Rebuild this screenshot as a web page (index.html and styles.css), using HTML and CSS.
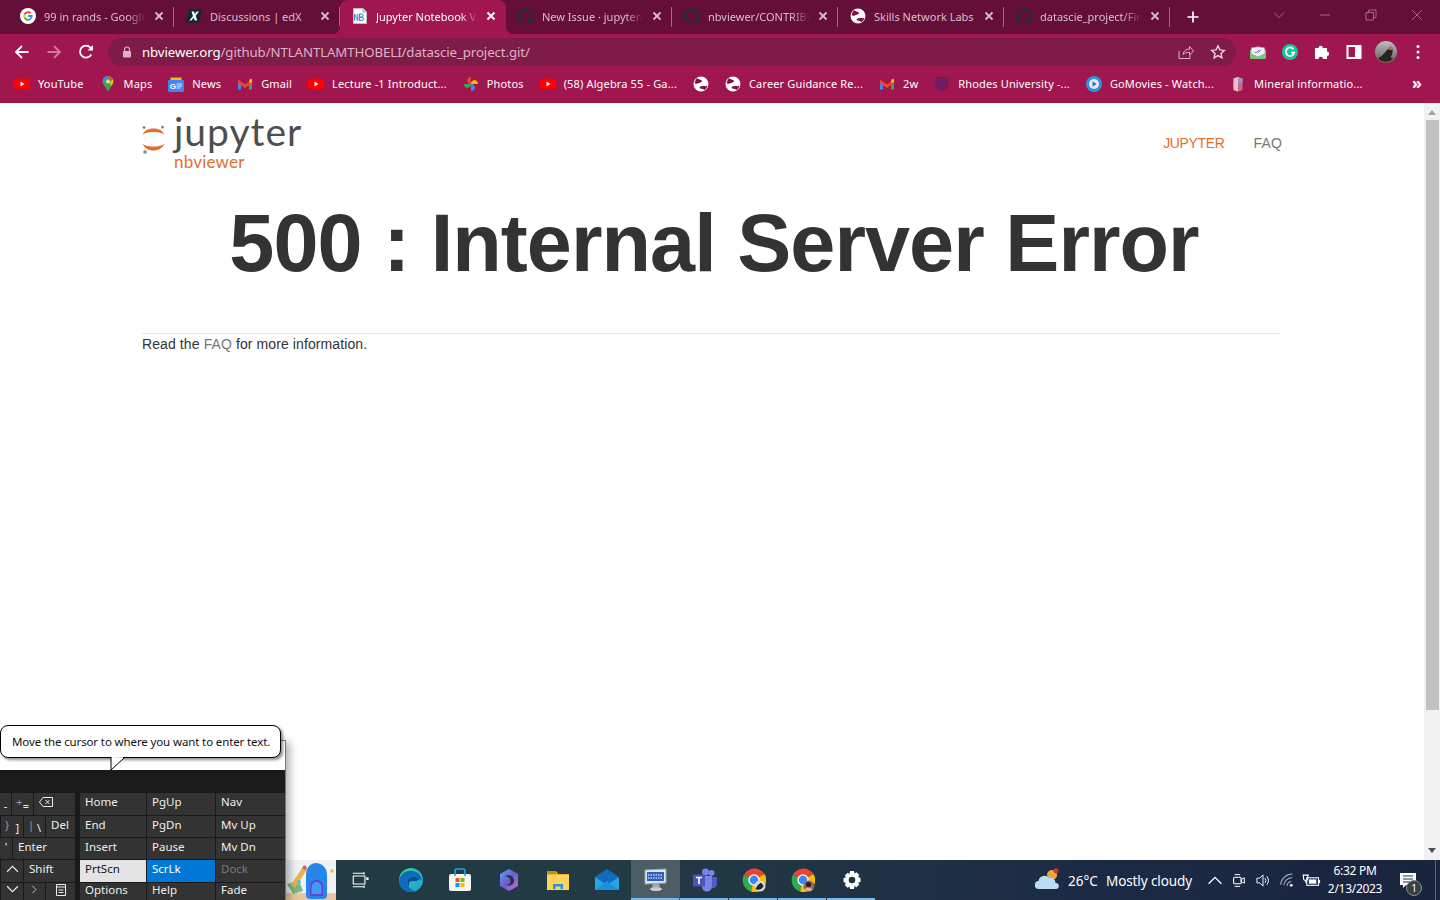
FILE: index.html
```html
<!DOCTYPE html>
<html lang="en">
<head>
<meta charset="utf-8">
<title>Jupyter Notebook Viewer</title>
<link rel="stylesheet" href="styles.css">
</head>
<body>
<svg class="defs" width="0" height="0" aria-hidden="true">
  <defs>
    <symbol id="github" viewBox="0 0 16 16"><path d="M8 0C3.58 0 0 3.58 0 8c0 3.54 2.29 6.53 5.47 7.59.4.07.55-.17.55-.38 0-.19-.01-.82-.01-1.49-2.01.37-2.53-.49-2.69-.94-.09-.23-.48-.94-.82-1.13-.28-.15-.68-.52-.01-.53.63-.01 1.08.58 1.23.82.72 1.21 1.87.87 2.33.66.07-.52.28-.87.51-1.07-1.78-.2-3.64-.89-3.64-3.95 0-.87.31-1.59.82-2.15-.08-.2-.36-1.02.08-2.12 0 0 .67-.21 2.2.82.64-.18 1.32-.27 2-.27.68 0 1.36.09 2 .27 1.53-1.04 2.2-.82 2.2-.82.44 1.1.16 1.92.08 2.12.51.56.82 1.27.82 2.15 0 3.07-1.87 3.75-3.65 3.95.29.25.54.73.54 1.48 0 1.07-.01 1.93-.01 2.2 0 .21.15.46.55.38A8.013 8.013 0 0016 8c0-4.42-3.58-8-8-8z" fill="#2a2d33"/></symbol>
    <symbol id="globe" viewBox="0 0 16 16"><circle cx="8" cy="8" r="7.500" fill="#fff"/><path d="M4 2.200C5.500 3 6.500 3.800 8 4c1 .1 1.200 1.300.5 2-1 .9-2.600.6-3.600 1.500-.8.7-1.800.3-3.200-.3C2 5.200 2.800 3.400 4 2.200zM6.500 11c1.500-.9 3.200-1.300 5-.9 1.100.2 2.300 0 2.900-.4-.4 1.800-1.300 3.200-2.700 4.200-1.200-.3-1.500-1.200-2.800-1.200-1 0-2.100-.2-2.400-1.700z" fill="#7d1440"/></symbol>
    <symbol id="youtube" viewBox="0 0 16 16"><rect x="0" y="2.500" width="16" height="11" rx="3" fill="#f00"/><path d="M6.500 5.500l4 2.500-4 2.500z" fill="#fff"/></symbol>
    <symbol id="gmail" viewBox="0 0 16 16"><path d="M1 4v9.500h3V6z" fill="#4285f4"/><path d="M15 4v9.500h-3V6z" fill="#34a853"/><path d="M1 3.500 8 8.500l7-5v3.500L8 12 1 7z" fill="#ea4335"/><path d="M12 6.200V4.500L13.500 2.800 15 3.500V7z" fill="#fbbc04"/></symbol>
    <symbol id="close" viewBox="0 0 10 10"><path d="M1.500 1.500l7 7m0-7l-7 7" stroke="currentColor" stroke-width="1.800" fill="none"/></symbol>
    <symbol id="chromeicon" viewBox="0 0 24 24"><path d="M12 12 2 6.500A12 12 0 0 1 22.500 6z" fill="#ea4335"/><path d="M12 12 2 6.500a12 12 0 0 0 7 17z" fill="#34a853"/><path d="M12 12l10.500-6a12 12 0 0 1-13.500 17.600z" fill="#fbbc04"/><circle cx="12" cy="12" r="5.700" fill="#fff"/><circle cx="12" cy="12" r="4.400" fill="#4285f4"/></symbol>
  </defs>
</svg>

<header class="chrome">
  <div class="tabstrip">
    <div class="tab sep">
      <svg class="favicon" viewBox="0 0 16 16"><circle cx="8" cy="8" r="8" fill="#fff"/><path d="M8 3.300a4.700 4.700 0 0 1 3.200 1.200L9.900 5.800A2.900 2.900 0 0 0 5.300 7L3.800 5.800A4.700 4.700 0 0 1 8 3.300z" fill="#ea4335"/><path d="M3.800 5.800 5.300 7a2.900 2.900 0 0 0 0 2L3.800 10.200a4.700 4.700 0 0 1 0-4.400z" fill="#fbbc04"/><path d="M3.800 10.200 5.300 9a2.900 2.900 0 0 0 4.300 1.500l1.400 1.100A4.700 4.700 0 0 1 3.800 10.200z" fill="#34a853"/><path d="M12.600 7.100H8v1.900h2.700a2.300 2.300 0 0 1-1.100 1.500l1.400 1.100a4.700 4.700 0 0 0 1.600-4.500z" fill="#4285f4"/></svg>
      <span class="tab-title">99 in rands - Google Search</span>
      <svg class="tab-x"><use href="#close"/></svg>
    </div>
    <div class="tab sep">
      <svg class="favicon" viewBox="0 0 16 16"><path d="M3 1.500h13l-3 13H0z" fill="#0e2a2d"/><path d="M5.500 3.500H8l.8 2.600 2-2.600h2.200L9.700 7.800l1.500 4.700H8.700L7.800 9.600l-2.300 2.900H3.300L7 8z" fill="#fff"/></svg>
      <span class="tab-title tab-full">Discussions | edX</span>
      <svg class="tab-x"><use href="#close"/></svg>
    </div>
    <div class="tab tab-active">
      <svg class="favicon" viewBox="0 0 16 16"><path d="M1.500.5H11l3.500 3.500v11.500h-13z" fill="#fff" stroke="#bbb"/><path d="M11 .5V4h3.500" fill="#ddd" stroke="#aaa"/><rect x="1.500" y="5" width="11" height="8" fill="#e8f0f7"/><path d="M2.500 12.500V6l3.200 6.500V6M7.500 6v6.500h2.200a1.600 1.600 0 0 0 0-3.400H7.500m0 0h2a1.500 1.500 0 0 0 0-3.100h-2" stroke="#3a7cb5" fill="none" stroke-width=".9"/></svg>
      <span class="tab-title">Jupyter Notebook Viewer</span>
      <svg class="tab-x"><use href="#close"/></svg>
    </div>
    <div class="tab sep">
      <svg class="favicon"><use href="#github"/></svg>
      <span class="tab-title">New Issue · jupyter/nbviewer</span>
      <svg class="tab-x"><use href="#close"/></svg>
    </div>
    <div class="tab sep">
      <svg class="favicon"><use href="#github"/></svg>
      <span class="tab-title">nbviewer/CONTRIBUTING.md</span>
      <svg class="tab-x"><use href="#close"/></svg>
    </div>
    <div class="tab sep">
      <svg class="favicon"><use href="#globe"/></svg>
      <span class="tab-title tab-full">Skills Network Labs</span>
      <svg class="tab-x"><use href="#close"/></svg>
    </div>
    <div class="tab sep">
      <svg class="favicon"><use href="#github"/></svg>
      <span class="tab-title">datascie_project/Final.ipynb</span>
      <svg class="tab-x"><use href="#close"/></svg>
    </div>
    <svg class="newtab" viewBox="0 0 12 12"><path d="M6 .5v11M.5 6h11" stroke="#fff" stroke-width="1.700"/></svg>
    <div class="winctl">
      <svg class="win-ic" viewBox="0 0 12 12"><path d="M1 3.500l5 5 5-5" fill="none" stroke="currentColor"/></svg>
      <svg class="win-ic" viewBox="0 0 12 12"><path d="M1 6h10" stroke="currentColor"/></svg>
      <svg class="win-ic" viewBox="0 0 12 12"><path d="M1 3.500h7.500V11H1zM3.500 3.500V1H11v7.500H8.500" fill="none" stroke="currentColor"/></svg>
      <svg class="win-ic" viewBox="0 0 12 12"><path d="M1 1l10 10M11 1 1 11" stroke="currentColor"/></svg>
    </div>
  </div>

  <div class="toolbar">
    <svg class="nav-ic" viewBox="0 0 16 16"><path d="M14.500 8H2M8 2 2 8l6 6" fill="none" stroke="#fff" stroke-width="1.800"/></svg>
    <svg class="nav-ic nav-dim" viewBox="0 0 16 16"><path d="M1.500 8H14M8 2l6 6-6 6" fill="none" stroke="#cf7a9d" stroke-width="1.800"/></svg>
    <svg class="nav-ic" viewBox="0 0 16 16"><path d="M13.300 10.500A6 6 0 1 1 12.500 3.600" fill="none" stroke="#fff" stroke-width="1.800"/><path d="M9.500 6.500H15V1z" fill="#fff"/></svg>
    <div class="omnibox">
      <svg class="lock" viewBox="0 0 10 12"><path d="M2.500 5V3.500a2.500 2.500 0 0 1 5 0V5" fill="none" stroke="#d8b4c6" stroke-width="1.200"/><rect x="1" y="5" width="8" height="6.500" rx="1" fill="#d8b4c6"/></svg>
      <span class="url"><span class="url-host">nbviewer.org</span>/github/NTLANTLAMTHOBELI/datascie_project.git/</span>
      <svg class="omni-ic" viewBox="0 0 16 16"><path d="M1 7v7.500h11V11M5 10.500c.5-3.500 3-5.500 6.500-5.500V2.500L15.500 7l-4 4V8.300C8.500 8.200 6.500 9 5 10.500z" fill="none" stroke="#d8b4c6"/></svg>
      <svg class="omni-ic" viewBox="0 0 16 16"><path d="m8 1.800 1.900 4.100 4.400.5-3.300 3 .9 4.400L8 11.600l-3.900 2.200.9-4.400-3.300-3 4.400-.5z" fill="none" stroke="#ecd6e0" stroke-width="1.400"/></svg>
    </div>
    <div class="ext-row">
      <svg class="ext" viewBox="0 0 16 16"><path d="M0 6l8-4 8 4v7.500a1.500 1.500 0 0 1-1.500 1.500h-13A1.500 1.500 0 0 1 0 13.500z" fill="#7dc27d"/><path d="M1.500 3.500h13v6L8 12.500l-6.500-3z" fill="#f1f1fa"/><path d="M4.500 7.500l1.500 1.500 3-3M8 8.500 10.800 6" fill="none" stroke="#6c63c9" stroke-width=".9"/></svg>
      <svg class="ext" viewBox="0 0 16 16"><circle cx="8" cy="8" r="8" fill="#15c39a"/><path d="M11.500 5.200A4.200 4.200 0 1 0 12.200 8.500H9" fill="none" stroke="#fff" stroke-width="1.700"/></svg>
      <svg class="ext" viewBox="0 0 16 16"><path d="M1 5h3.500a2.200 2.200 0 1 1 4.400 0H13v3.500a2.200 2.200 0 1 1 0 4.400V16H9a2.200 2.200 0 1 0-4.400 0H1z" fill="#fff" transform="translate(0 -1)"/></svg>
      <svg class="ext" viewBox="0 0 16 16"><path d="M1.500 2h13v12h-13z" fill="none" stroke="#fff" stroke-width="2"/><rect x="9" y="2" width="6" height="12" fill="#fff"/></svg>
      <svg class="avatar" viewBox="0 0 24 24"><defs><linearGradient id="av" x1="0" y1="0" x2="0" y2="1"><stop offset="0" stop-color="#b7bfc4"/><stop offset="1" stop-color="#6a5a50"/></linearGradient></defs><circle cx="12" cy="12" r="12" fill="url(#av)"/><path d="M4 18c4-1 6-5 9-8 2-2 5-3 6-1 1 3-1 7-2 9l3 1a12 12 0 0 1-16 1z" fill="#2a2220"/><circle cx="17" cy="8" r="2.200" fill="#a9705a"/></svg>
      <svg class="menu-dots" viewBox="0 0 4 16"><circle cx="2" cy="2.500" r="1.500" fill="#fff"/><circle cx="2" cy="8" r="1.500" fill="#fff"/><circle cx="2" cy="13.500" r="1.500" fill="#fff"/></svg>
    </div>
  </div>

  <nav class="bookmarks">
    <a class="bm"><svg class="bm-ic"><use href="#youtube"/></svg><span>YouTube</span></a>
    <a class="bm"><svg class="bm-ic" viewBox="0 0 16 16"><path d="M8 0a5.500 5.500 0 0 1 5.500 5.500C13.500 9 10 11 8 16 6 11 2.500 9 2.500 5.500A5.500 5.500 0 0 1 8 0z" fill="#34a853"/><path d="M3 3.300A5.500 5.500 0 0 1 8 0v3.500L3.500 7z" fill="#4285f4"/><path d="M8 0a5.500 5.500 0 0 1 5 3l-3.500 1z" fill="#ea4335"/><path d="M13 3.300c1 2.700-.5 5-2 6.500L9.500 6.500z" fill="#fbbc04"/><circle cx="8" cy="5.500" r="2" fill="#f5d9a0"/></svg><span>Maps</span></a>
    <a class="bm"><svg class="bm-ic" viewBox="0 0 16 16"><rect x="2" y="1" width="12" height="6" rx="1" fill="#34a853"/><rect x="3" y="2" width="10" height="3" fill="#fbbc04"/><rect y="4" width="16" height="12" rx="1.200" fill="#4285f4"/><text class="news-g" x="1.800" y="12.500">G</text><path d="M8.500 8h5.500M8.500 10h5.500M8.500 12h4" stroke="#dbe8fb" stroke-width="1"/></svg><span>News</span></a>
    <a class="bm"><svg class="bm-ic"><use href="#gmail"/></svg><span>Gmail</span></a>
    <a class="bm"><svg class="bm-ic"><use href="#youtube"/></svg><span>Lecture -1 Introduct...</span></a>
    <a class="bm"><svg class="bm-ic" viewBox="0 0 16 16"><path d="M8 8V1a4 4 0 0 0-4 3.500A4 4 0 0 0 8 8z" fill="#ea4335"/><path d="M8 8h7a4 4 0 0 0-3.500-4A4 4 0 0 0 8 8z" fill="#fbbc04"/><path d="M8 8v7a4 4 0 0 0 4-3.500A4 4 0 0 0 8 8z" fill="#4285f4"/><path d="M8 8H1a4 4 0 0 0 3.500 4A4 4 0 0 0 8 8z" fill="#34a853"/></svg><span>Photos</span></a>
    <a class="bm"><svg class="bm-ic"><use href="#youtube"/></svg><span>(58) Algebra 55 - Ga...</span></a>
    <a class="bm"><svg class="bm-ic"><use href="#globe"/></svg></a>
    <a class="bm"><svg class="bm-ic"><use href="#globe"/></svg><span>Career Guidance Re...</span></a>
    <a class="bm"><svg class="bm-ic"><use href="#gmail"/></svg><span>2w</span></a>
    <a class="bm"><svg class="bm-ic" viewBox="0 0 16 16"><path d="M2 1.500h12v7c0 3-3 4.500-6 6.500-3-2-6-3.500-6-6.500z" fill="#7c1a5c" stroke="#5e1a6b"/><path d="M4 4l4 8 4-8M6.500 4 8 8l1.500-4" fill="none" stroke="#5e1a7b"/></svg><span>Rhodes University -...</span></a>
    <a class="bm"><svg class="bm-ic" viewBox="0 0 16 16"><circle cx="8" cy="8" r="8" fill="#2f93e0"/><circle cx="8" cy="8" r="5" fill="#e8ecf5"/><path d="M6.500 5.300l4.200 2.700-4.200 2.700z" fill="#2f6fc0"/></svg><span>GoMovies - Watch...</span></a>
    <a class="bm"><svg class="bm-ic" viewBox="0 0 16 16"><path d="M3.500 2.500 8 1l4.500 1.500V14L8 15.500 3.500 14z" fill="#c66a85"/><path d="M3.500 2.500 8 1v14.500L3.500 14z" fill="#e4c1cb"/><path d="M8 1l4.500 1.500V7H8z" fill="#a28fc2"/></svg><span>Mineral informatio...</span></a>
    <span class="bm-more">»</span>
  </nav>
</header>

<div class="viewport">
  <main class="page">
    <div class="page-inner">
      <div class="site-head">
        <div class="logo">
          <svg class="logo-mark" viewBox="0 0 26 32"><path d="M1.500 11.500C4 7 8 5.500 12.500 5.500S21 7 23.500 11.500C20 9.500 16.500 9 12.500 9S5 9.500 1.500 11.500z" fill="#e46e2e"/><path d="M1.500 21C5 23 8.500 23.500 12.500 23.500S20 23 23.500 21C21 25.500 17 27.500 12.500 27.500S4 25.500 1.500 21z" fill="#e46e2e"/><circle cx="21.500" cy="4" r="1.500" fill="#8a8a8a"/><circle cx="3" cy="4.500" r="1.200" fill="#666"/><circle cx="4" cy="29" r="1.800" fill="#8a8a8a"/></svg>
          <div class="logo-text">
            <span class="logo-name">jupyter</span>
            <span class="logo-sub">nbviewer</span>
          </div>
        </div>
        <nav class="site-nav">
          <a class="nav-on">JUPYTER</a>
          <a class="nav-off">FAQ</a>
        </nav>
      </div>
      <h1 class="err">500 : Internal Server Error</h1>
      <hr class="rule">
      <p class="note">Read the <a class="faq">FAQ</a> for more information.</p>
    </div>
  </main>
  <div class="scrollbar">
    <svg class="sb-arrow" viewBox="0 0 8 5"><path d="M0 5 4 0l4 5z" fill="#a3a3a3"/></svg>
    <div class="sb-thumb"></div>
    <svg class="sb-arrow" viewBox="0 0 8 5"><path d="M0 0l4 5 4-5z" fill="#505050"/></svg>
  </div>
</div>

<footer class="taskbar">
  <div class="tb-backpack">
    <svg class="backpack" viewBox="0 0 51 40"><rect width="51" height="40" fill="#eef2f4"/><path d="M0 33h51v7H0z" fill="#e6c69a"/><path d="M2 24l12-3 4 10-10 3z" fill="#7db77f"/><path d="M6 25 17 8l4 3-11 17z" fill="#eab34b"/><path d="M17 8l2-3 3 2-1 4z" fill="#e0604f"/><circle cx="14" cy="22" r="2" fill="#54c5d8"/><path d="M21 15c0-8 5-12 10-12s11 4 11 12v20c0 3-2 4-4 4H25c-2 0-4-1-4-4z" fill="#2486ec"/><path d="M25 27c0-5 3-7 6.500-7s6.500 2 6.500 7v9H25z" fill="#6a3fd6"/><path d="M26.500 28c0-4 2-6 5-6s5 2 5 6v6h-10z" fill="#3f9af0"/><circle cx="47" cy="11" r="1.700" fill="#f5b82e"/></svg>
  </div>
  <div class="tb-btn tb-wide"><svg class="tb-ic tb-small" viewBox="0 0 20 20"><path d="M2.500 5.500h13v9h-13zM2 2.500h12M2 17.500h12M14.500 1v3M14.500 16v3" fill="none" stroke="#fff" stroke-width="1.200"/><rect x="17" y="7" width="2.500" height="3" fill="#fff"/></svg></div>
  <div class="tb-btn"><svg class="tb-ic" viewBox="0 0 24 24"><defs><linearGradient id="edge1" x1="0" y1="0" x2="1" y2="1"><stop offset="0" stop-color="#39d98a"/><stop offset="1" stop-color="#1b9de2"/></linearGradient></defs><circle cx="12" cy="12" r="12" fill="url(#edge1)"/><path d="M0 13C1 5 8 2 14 3c5 1 9 5 9 10-2-3-6-5-10-4-5 1-6 6-3 10 1 2 4 4 7 4-2 1-3 1-5 1C5 24 0 19 0 13z" fill="#0f6cbd"/><path d="M10 19c-3-4-2-9 3-10 3-.6 6 .4 8 2-1 1-4 3-8 2-2 0-3 1-3 3z" fill="#0b4f92"/></svg></div>
  <div class="tb-btn"><svg class="tb-ic" viewBox="0 0 24 24"><rect x="1" y="6" width="22" height="17" rx="2" fill="#f5f5f5"/><path d="M7 8V3a2 2 0 0 1 2-2h6a2 2 0 0 1 2 2v5" fill="none" stroke="#1fa6e0" stroke-width="1.600"/><rect x="7.500" y="10" width="4" height="4" fill="#f25022"/><rect x="12.500" y="10" width="4" height="4" fill="#7fba00"/><rect x="7.500" y="15" width="4" height="4" fill="#00a4ef"/><rect x="12.500" y="15" width="4" height="4" fill="#ffb900"/></svg></div>
  <div class="tb-btn"><svg class="tb-ic" viewBox="0 0 24 24"><defs><linearGradient id="cop" x1="0" y1="0" x2="1" y2="1"><stop offset="0" stop-color="#5aa7ee"/><stop offset=".5" stop-color="#6d5bd0"/><stop offset="1" stop-color="#c774d8"/></linearGradient></defs><path d="M12 1l9 5v12l-9 5-9-5V6z" fill="url(#cop)"/><path d="M8 8c4-2 9 0 9 4.500S12 19 8.500 16.500c3 .5 5-1 5-3.500s-2.500-4.500-5.500-5z" fill="#24343f"/></svg></div>
  <div class="tb-btn"><svg class="tb-ic" viewBox="0 0 24 24"><path d="M1 3h9l2 3h11v16H1z" fill="#f2b51d"/><rect x="1" y="3" width="9" height="3" fill="#c98a0f"/><rect x="1" y="7" width="22" height="15" fill="#f9d45c"/><path d="M7 21v-5h10v5h-2.500v-2.500h-5V21z" fill="#2f8fd8"/></svg></div>
  <div class="tb-btn"><svg class="tb-ic" viewBox="0 0 24 24"><path d="M12 1 24 9v13H0V9z" fill="#0f6cbd"/><path d="M0 9l12 8 12-8v13H0z" fill="#29a4ea"/><path d="M0 22l12-9 12 9z" fill="#1d8fdd"/></svg></div>
  <div class="tb-btn tb-on"><svg class="tb-ic" viewBox="0 0 24 24"><path d="M1 2l21-1v14L1 16z" fill="#dfe6ee" stroke="#9aa7b4"/><rect x="3" y="4" width="17" height="9" fill="#2f5fb8"/><path d="M4 7h15M4 10h15" stroke="#bcd2f2" stroke-dasharray="1.500 1" stroke-width="1.500"/><path d="M9 16h6l1 3H8z" fill="#a3a9ad"/><ellipse cx="12" cy="21" rx="6" ry="2" fill="#c9cdd0"/></svg></div>
  <div class="tb-btn tb-run"><svg class="tb-ic" viewBox="0 0 24 24"><circle cx="18.500" cy="5" r="3" fill="#7b83eb"/><circle cx="12.500" cy="4" r="3.500" fill="#7b83eb"/><path d="M15 9h9v7a4 4 0 0 1-5 4z" fill="#5059c9"/><path d="M6 8h13v10a5 5 0 0 1-10 1z" fill="#7b83eb"/><rect y="6.500" width="12" height="12" rx="1" fill="#4b53bc"/><path d="M3 9.500h6M6 9.500V16" stroke="#fff" stroke-width="1.700"/></svg></div>
  <div class="tb-btn tb-run"><svg class="tb-ic" viewBox="0 0 24 24"><use href="#chromeicon"/><circle cx="18" cy="18" r="5.500" fill="#d8d8d8"/><path d="M13.500 21c1.500-3 3-5 5-6 2 0 2 2 3 3-1 3-5 5-8 3z" fill="#2a2220"/></svg></div>
  <div class="tb-btn tb-run"><svg class="tb-ic" viewBox="0 0 24 24"><use href="#chromeicon"/><circle cx="18" cy="18" r="5.500" fill="#8c6a5a"/><circle cx="17.500" cy="16.500" r="2.500" fill="#2a1c18"/><path d="M13.500 21.500c1-2.500 7-2.500 8 0a5.500 5.500 0 0 1-8 0z" fill="#e0b090"/></svg></div>
  <div class="tb-btn tb-run"><svg class="tb-ic tb-gear" viewBox="0 0 20 20"><path d="M8 1h4l.5 2.500 2-1.200 2.800 2.800-1.200 2 2.400.9v4l-2.400.5 1.200 2-2.800 2.800-2-1.200L12 19H8l-.5-2.500-2 1.200-2.800-2.800 1.200-2L1.500 12V8L4 7.500l-1.200-2 2.800-2.800 2 1.200z" fill="#fff"/><circle cx="10" cy="10" r="3.300" fill="#22343f"/></svg></div>
  <div class="tray">
    <svg class="weather" viewBox="0 0 26 24"><circle cx="17" cy="7" r="5" fill="#f2a53a"/><circle cx="21" cy="2.800" r="2.500" fill="#c9352a"/><path d="M4 21a4 4 0 0 1-.5-8A6 6 0 0 1 14 10a5 5 0 0 1 6.500 5 3 3 0 0 1 .5 6z" fill="#bcdcf5"/></svg>
    <span class="tray-temp">26°C</span>
    <span class="tray-cond">Mostly cloudy</span>
    <svg class="tray-ic" viewBox="0 0 14 14"><path d="M1 10l6-6 6 6" fill="none" stroke="#fff" stroke-width="1.200"/></svg>
    <svg class="tray-ic" viewBox="0 0 14 14"><rect x="2" y="4" width="7" height="6" rx="1" fill="none" stroke="#fff"/><path d="M9 6l3-1.500v5L9 8zM3 1.500h5M3 12.500h5" fill="none" stroke="#fff" stroke-width=".9"/></svg>
    <svg class="tray-ic" viewBox="0 0 16 16"><path d="M1.500 5.500h3l3.500-3.500v12l-3.500-3.500h-3zM10 5.500a3.500 3.500 0 0 1 0 5M12 3.500a6.500 6.500 0 0 1 0 9" fill="none" stroke="#fff"/></svg>
    <svg class="tray-ic" viewBox="0 0 14 14"><path d="M1 11a11 11 0 0 1 11-10M4 11.500a7.500 7.500 0 0 1 8-7M7 12a4.500 4.500 0 0 1 4-4" fill="none" stroke="#a9b4bf"/><circle cx="11" cy="11.500" r="1.300" fill="#fff"/></svg>
    <svg class="tray-ic" viewBox="0 0 18 14"><path d="M2 2v3a2 2 0 0 0 4 0V2M1 2h6M4 7v2" fill="none" stroke="#fff"/><rect x="5" y="4.500" width="11" height="7" fill="none" stroke="#fff"/><rect x="7" y="6" width="7" height="4" fill="#fff"/><rect x="16" y="6.500" width="1.500" height="3" fill="#fff"/></svg>
    <div class="clock"><span>6:32 PM</span><span>2/13/2023</span></div>
    <div class="notif">
      <svg class="notif-ic" viewBox="0 0 16 16"><path d="M0 0h16v12H6l-3 3v-3H0z" fill="#fff"/><path d="M3 3h10M3 6h10M3 9h7" stroke="#22314a"/></svg>
      <span class="notif-badge">1</span>
    </div>
    <div class="show-desktop"></div>
  </div>
</footer>

<section class="osk">
  <div class="osk-title"></div>
  <div class="osk-body">
    <div class="keys-left">
      <div class="kr">
        <span class="k w11 kc k-low">-</span><span class="k w21 k-pair"><i>+</i><b>=</b></span><span class="k kfill klabel"><svg class="bksp" viewBox="0 0 14 10"><path d="M4 .5h9.500v9H4L.5 5z" fill="none" stroke="#eee"/><path d="M6.500 3l4 4m0-4-4 4" stroke="#eee"/></svg></span>
      </div>
      <div class="kr">
        <span class="k w22 kpad k-pair"><i>}</i><b>]</b></span><span class="k w21 k-pair"><i>|</i><b>\</b></span><span class="k kfill klabel">Del</span>
      </div>
      <div class="kr">
        <span class="k w12 kc">'</span><span class="k kfill klabel">Enter</span>
      </div>
      <div class="kr">
        <span class="k w22 kpad kc"><svg class="chev" viewBox="0 0 12 8"><path d="M1 7l5-5 5 5" fill="none" stroke="#eee"/></svg></span><span class="k kfill klabel">Shift</span>
      </div>
      <div class="kr">
        <span class="k w22 kpad kc"><svg class="chev" viewBox="0 0 12 8"><path d="M1 1l5 5 5-5" fill="none" stroke="#eee"/></svg></span><span class="k w21 kc"><svg class="chev" viewBox="0 0 8 12"><path d="M1 1l5 5-5 5" fill="none" stroke="#eee"/></svg></span><span class="k kfill kc"><svg class="mnu" viewBox="0 0 10 12"><path d="M.5.500h9v11h-9zM.5 3h9M2.500 6h5M2.500 8.500h5" fill="none" stroke="#eee"/></svg></span>
      </div>
    </div>
    <div class="keys-right">
      <span class="kk">Home</span><span class="kk">PgUp</span><span class="kk">Nav</span>
      <span class="kk">End</span><span class="kk">PgDn</span><span class="kk">Mv Up</span>
      <span class="kk">Insert</span><span class="kk">Pause</span><span class="kk">Mv Dn</span>
      <span class="kk kk-light">PrtScn</span><span class="kk kk-blue">ScrLk</span><span class="kk kk-dim">Dock</span>
      <span class="kk">Options</span><span class="kk">Help</span><span class="kk">Fade</span>
    </div>
  </div>
</section>

<div class="tip">Move the cursor to where you want to enter text.</div>
<svg class="tip-tail" viewBox="0 0 16 14"><path d="M1 0v13L14 1" fill="#fff" stroke="#000"/><path d="M2 0h11v.8H2z" fill="#fff"/></svg>
</body>
</html>
```
FILE: styles.css
```css
* { box-sizing: border-box; }
html, body { margin: 0; height: 100%; }
body {
  position: relative;
  width: 1440px;
  height: 900px;
  overflow: hidden;
  display: flex;
  flex-direction: column;
  background: #fff;
  font-family: "Noto Sans", "Open Sans", sans-serif;
}
.defs { position: absolute; }

/* browser chrome */
.chrome { flex: none; height: 103px; background: #a0174f; color: #fff; }
.tabstrip {
  display: flex;
  align-items: stretch;
  height: 34px;
  padding-left: 8px;
  background: #650e37;
}
.tab {
  position: relative;
  flex: none;
  width: 166px;
  display: flex;
  align-items: center;
  padding: 0 9px 2px 12px;
  color: #d9bccb;
  font-size: 11px;
}
.tab.sep::after {
  content: "";
  position: absolute;
  right: 0;
  top: 7px;
  width: 1px;
  height: 20px;
  background: #a2688a;
}
.tab-active {
  background: #a0174f;
  border-radius: 8px 8px 0 0;
  color: #fff;
}
.tab-active::before, .tab-active::after {
  content: "";
  position: absolute;
  bottom: 0;
  width: 8px;
  height: 8px;
}
.tab-active::before {
  left: -8px;
  background: radial-gradient(circle at 0 0, #650e37 8px, #a0174f 8.500px);
}
.tab-active::after {
  right: -8px;
  background: radial-gradient(circle at 100% 0, #650e37 8px, #a0174f 8.500px);
}
.favicon { flex: none; width: 16px; height: 16px; }
.tab-title {
  flex: 1;
  min-width: 0;
  margin-left: 8px;
  white-space: nowrap;
  overflow: hidden;
  -webkit-mask-image: linear-gradient(to right, #000 82%, transparent 100%);
  mask-image: linear-gradient(to right, #000 82%, transparent 100%);
}
.tab-full { -webkit-mask-image: none; mask-image: none; }
.tab-x { flex: none; width: 10px; height: 10px; margin-left: 8px; margin-right: 1px; }
.newtab { flex: none; width: 12px; height: 12px; align-self: center; margin-left: 17px; }
.winctl {
  margin-left: auto;
  display: flex;
  align-items: flex-start;
  color: #a6688a;
}
.win-ic { width: 46px; height: 12px; margin-top: 9px; }

.toolbar { display: flex; align-items: center; height: 36px; padding-left: 14px; }
.nav-ic { flex: none; width: 16px; height: 16px; margin-right: 16px; }
.nav-ic + .nav-ic + .nav-ic { margin-right: 14px; }
.omnibox {
  flex: none;
  width: 1128px;
  height: 28px;
  display: flex;
  align-items: center;
  padding: 0 10px 0 14px;
  border-radius: 14px;
  background: #7e1b46;
}
.lock { flex: none; width: 10px; height: 12px; }
.url {
  flex: 1;
  margin-left: 10px;
  font-size: 13.250px;
  color: #dcb3c7;
  white-space: nowrap;
  letter-spacing: -0.1px;
}
.url-host { color: #fff; }
.omni-ic { flex: none; width: 16px; height: 16px; margin-left: 16px; }
.ext-row { display: flex; align-items: center; margin-left: 14px; }
.ext { flex: none; width: 16px; height: 16px; margin-right: 16px; }
.avatar { flex: none; width: 22px; height: 22px; margin-left: -3px; margin-right: 19px; }
.menu-dots { flex: none; width: 4px; height: 16px; }

.bookmarks { display: flex; align-items: center; height: 33px; padding: 0 0 5px 6px; font-size: 11px; position: relative; }
.bm { flex: none; display: flex; align-items: center; gap: 8px; padding: 0 8px; white-space: nowrap; letter-spacing: 0.15px; }
.bm span { margin-bottom: 2px; }
.bm-ic { flex: none; width: 16px; height: 16px; }
.news-g { font: bold 8px "Liberation Sans", sans-serif; fill: #fff; }
.bm-more { position: absolute; left: 1412px; top: 2px; font-size: 16px; font-weight: 700; }

/* page */
.viewport { flex: 1; min-height: 0; display: flex; }
.page { flex: 1; min-width: 0; }
.page-inner { width: 1141px; margin-left: 141px; }
.site-head { display: flex; justify-content: space-between; padding-left: 1px; height: 90px; }
.logo { display: flex; align-items: flex-start; padding-top: 11px; }
.logo-mark { flex: none; width: 26px; height: 34px; margin-top: 8px; margin-right: 7px; margin-left: -1px; }
.logo-text { display: flex; flex-direction: column; }
.logo-name {
  font-family: "Lato", sans-serif;
  font-size: 39px;
  line-height: 34px;
  letter-spacing: 1px;
  color: #4e4e4e;
}
.logo-sub {
  font-family: "Lato", sans-serif;
  font-size: 17px;
  line-height: 18px;
  letter-spacing: 0.2px;
  color: #e46e2e;
  margin-top: 5px;
}
.site-nav {
  display: flex;
  gap: 29px;
  padding-top: 32px;
  font: 14px/16px "Liberation Sans", sans-serif;
  letter-spacing: 0.15px;
}
.nav-on { color: #e46e2e; letter-spacing: -0.35px; }
.nav-off { color: #777; }
.err {
  margin: 0;
  padding-left: 5px;
  text-align: center;
  font: 700 81px/100px "Liberation Sans", sans-serif;
  letter-spacing: -0.95px;
  color: #333;
}
.rule { margin: 40px 0 0 1px; border: 0; border-top: 1px solid #e6e6e6; width: 1138px; }
.note {
  margin: 0 0 0 1px;
  font: 14px/20px "Liberation Sans", sans-serif;
  letter-spacing: 0.1px;
  color: #333;
}
.faq { color: #777; }

.scrollbar {
  flex: none;
  width: 16px;
  background: #f1f1f1;
  display: flex;
  flex-direction: column;
  align-items: center;
  padding: 7px 0;
}
.sb-arrow { flex: none; width: 8px; height: 5px; }
.sb-arrow:last-child { margin-top: auto; }
.sb-thumb { width: 13px; height: 590px; margin-top: 5px; background: #c1c1c1; }

/* taskbar */
.taskbar {
  flex: none;
  height: 40px;
  display: flex;
  padding-left: 285px;
  background: linear-gradient(to right, #203a42 0%, #223a44 45%, #1c2b45 75%, #19243f 100%);
}
.tb-backpack { flex: none; width: 51px; }
.backpack { display: block; width: 51px; height: 40px; }
.tb-btn { flex: none; width: 49px; display: flex; align-items: center; justify-content: center; position: relative; }
.tb-wide { width: 50px; padding-right: 2px; }
.tb-ic { width: 24px; height: 24px; }
.tb-small { width: 18px; height: 18px; }
.tb-gear { width: 20px; height: 20px; }
.tb-on { background: #4d5c65; }
.tb-on::after, .tb-run::after {
  content: "";
  position: absolute;
  left: 0;
  right: 1px;
  bottom: 0;
  height: 2px;
  background: #76b9ed;
}
.tray { flex: 1; display: flex; align-items: center; color: #fff; font-size: 13.500px; padding-left: 159px; }
.weather { flex: none; width: 26px; height: 24px; }
.tray-temp { margin-left: 7px; width: 38px; white-space: nowrap; padding-top: 1px; }
.tray-cond { width: 97px; white-space: nowrap; letter-spacing: -0.1px; padding-top: 1px; }
.tray-ic { flex: none; width: 24px; height: 15px; }
.clock {
  flex: none;
  width: 64px;
  display: flex;
  flex-direction: column;
  align-items: center;
  font-size: 12px;
  line-height: 18px;
  letter-spacing: -0.3px;
}
.notif { flex: none; width: 42px; position: relative; height: 40px; }
.notif-ic { position: absolute; left: 13px; top: 13px; width: 16px; height: 16px; }
.notif-badge {
  position: absolute;
  left: 19px;
  top: 20px;
  width: 16px;
  height: 16px;
  border-radius: 50%;
  background: #3b3f44;
  border: 1px solid #8b8f93;
  font-size: 10px;
  line-height: 14px;
  text-align: center;
}
.show-desktop { flex: 1; align-self: stretch; margin-left: 6px; border-left: 1px solid #5a6578; }

/* on-screen keyboard window */
.osk {
  position: absolute;
  left: 0;
  top: 740px;
  width: 286px;
  height: 160px;
  background: #fff;
  border-top: 1px solid #777;
  border-right: 1px solid #777;
  box-shadow: 4px 2px 8px rgba(0,0,0,.3);
  display: flex;
  flex-direction: column;
}
.osk-title { flex: none; height: 29px; background: #fff; }
.osk-body {
  flex: 1;
  display: flex;
  gap: 5px;
  padding-top: 23px;
  background: #1a1a1a;
  color: #eee;
  font-size: 11.500px;
}
.keys-left { flex: none; width: 75px; display: grid; grid-template-rows: 22px 21px 21px 22px 18px; row-gap: 1px; }
.kr { display: flex; gap: 1px; min-height: 0; }
.k { display: flex; align-items: center; background: #333; overflow: hidden; padding-bottom: 5px; }
.w11 { width: 11px; }
.w12 { width: 12px; }
.w21 { width: 21px; }
.w22 { width: 22px; }
.kpad { margin-left: 1px; }
.kfill { flex: 1; }
.kc { justify-content: center; }
.klabel { padding-left: 5px; }
.k-low { align-items: flex-end; padding-bottom: 2px; }
.k-pair { justify-content: space-between; align-items: stretch; padding: 2px 4px; font-size: 11px; line-height: 14px; }
.k-pair i { font-style: normal; color: #999; }
.k-pair b { font-weight: 400; color: #eee; align-self: flex-end; }
.bksp { width: 14px; height: 10px; }
.chev { width: 13px; height: 9px; }
.mnu { width: 10px; height: 12px; }
.keys-right {
  flex: none;
  width: 205px;
  display: grid;
  grid-template-columns: 66px 68px 69px;
  grid-template-rows: 22px 21px 21px 22px 18px;
  column-gap: 1px;
  row-gap: 1px;
}
.kk { display: flex; align-items: center; padding: 0 0 5px 5px; background: #333; white-space: nowrap; }
.kk-light { background: #e3e3e3; color: #111; }
.kk-blue { background: #0078d7; color: #fff; }
.kk-dim { color: #7a7a7a; }

.tip {
  position: absolute;
  left: 0;
  top: 725px;
  width: 281px;
  height: 33px;
  padding-left: 11px;
  background: #fff;
  border: 1px solid #000;
  border-radius: 8px;
  box-shadow: 2px 2px 3px rgba(0,0,0,.45);
  color: #111;
  font-size: 11.500px;
  line-height: 32px;
  letter-spacing: -0.12px;
  white-space: nowrap;
}
.tip-tail { position: absolute; left: 110px; top: 757px; width: 16px; height: 14px; }
```
